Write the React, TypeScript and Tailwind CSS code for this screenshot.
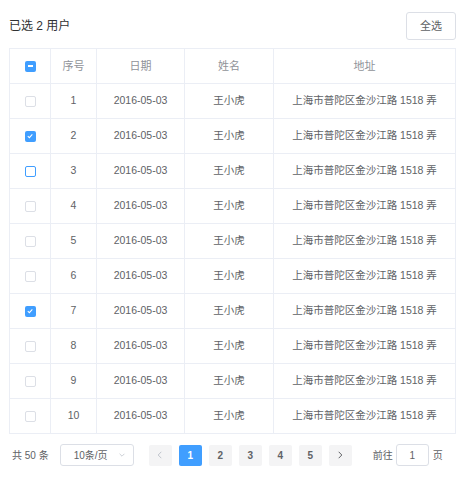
import { useState } from 'react';

const rows = Array.from({ length: 10 }, (_, i) => ({
  id: i + 1,
  date: '2016-05-03',
  name: '王小虎',
  address: '上海市普陀区金沙江路 1518 弄',
}));

function Checkbox({ state, focus }: { state: 'on' | 'off' | 'half'; focus?: boolean }) {
  if (state === 'on') {
    return (
      <span className="inline-flex h-[11px] w-[11px] items-center justify-center rounded-[2px] bg-[#409eff]">
        <svg viewBox="0 0 10 10" className="h-[8px] w-[8px]">
          <path d="M2.2 5.2 L4.2 7.1 L7.9 3" fill="none" stroke="white" strokeWidth="1.3" />
        </svg>
      </span>
    );
  }
  if (state === 'half') {
    return (
      <span className="inline-flex h-[11px] w-[11px] items-center justify-center rounded-[2px] bg-[#409eff]">
        <span className="h-[1.5px] w-[5px] bg-white" />
      </span>
    );
  }
  return (
    <span
      className={`inline-block h-[11px] w-[11px] rounded-[2px] border bg-white ${
        focus ? 'border-[#409eff]' : 'border-[#dcdfe6]'
      }`}
    />
  );
}

export default function App() {
  const [selected] = useState<number[]>([2, 7]);
  const cell = 'border border-[#ebeef5] text-center h-[35px] p-0';

  return (
    <div
      className="w-[474px] h-[485px] bg-white pl-[9px] pr-[18px]"
      style={{ fontFamily: '"Liberation Sans", "Noto Sans CJK SC", sans-serif' }}
    >
      <div className="flex h-[48px] items-center justify-between pt-[4px]">
        <span className="text-[12px] text-[#303133]">已选 {selected.length} 用户</span>
        <button className="h-[28px] w-[50px] rounded-[3px] border border-[#dcdfe6] text-[11px] text-[#606266]">
          全选
        </button>
      </div>

      <table className="w-[447px] table-fixed border-collapse">
        <colgroup>
          <col className="w-[41px]" />
          <col className="w-[46px]" />
          <col className="w-[88px]" />
          <col className="w-[89px]" />
          <col />
        </colgroup>
        <thead>
          <tr className="text-[11px] text-[#909399]">
            <th className={`${cell} font-normal`}>
              <span className="flex items-center justify-center">
                <Checkbox state="half" />
              </span>
            </th>
            <th className={`${cell} font-normal`}>序号</th>
            <th className={`${cell} font-normal`}>日期</th>
            <th className={`${cell} font-normal`}>姓名</th>
            <th className={`${cell} font-normal`}>地址</th>
          </tr>
        </thead>
        <tbody>
          {rows.map((r) => (
            <tr key={r.id} className="text-[10.5px] text-[#606266]">
              <td className={cell}>
                <span className="flex items-center justify-center">
                  <Checkbox state={selected.includes(r.id) ? 'on' : 'off'} focus={r.id === 3} />
                </span>
              </td>
              <td className={cell}>{r.id}</td>
              <td className={cell}>{r.date}</td>
              <td className={cell}>{r.name}</td>
              <td className={cell}>{r.address}</td>
            </tr>
          ))}
        </tbody>
      </table>

      <div className="mt-[10px] flex h-[22px] items-center text-[10px] text-[#606266]">
        <span className="ml-[3px]">共 50 条</span>
        <div className="ml-[11px] flex h-[22px] w-[74px] items-center justify-between rounded-[3px] border border-[#dcdfe6] pl-[13px] pr-[7px]">
          <span>10条/页</span>
          <svg viewBox="0 0 10 10" className="h-[8px] w-[8px]">
            <path d="M2 3.5 L5 6.5 L8 3.5" fill="none" stroke="#c0c4cc" strokeWidth="1" />
          </svg>
        </div>
        <div className="ml-[15px] flex gap-[7px]">
          <span className="flex h-[21px] w-[23px] items-center justify-center rounded-[2px] bg-[#f4f4f5]">
            <svg viewBox="0 0 10 10" className="h-[10px] w-[10px]">
              <path d="M6.3 1.8 L3.2 5 L6.3 8.2" fill="none" stroke="#c0c4cc" strokeWidth="1" />
            </svg>
          </span>
          {[1, 2, 3, 4, 5].map((p) => (
            <span
              key={p}
              className={`flex h-[21px] w-[23px] items-center justify-center rounded-[2px] font-bold ${
                p === 1 ? 'bg-[#409eff] text-white' : 'bg-[#f4f4f5] text-[#606266]'
              }`}
            >
              {p}
            </span>
          ))}
          <span className="flex h-[21px] w-[23px] items-center justify-center rounded-[2px] bg-[#f4f4f5]">
            <svg viewBox="0 0 10 10" className="h-[10px] w-[10px]">
              <path d="M3.7 1.8 L6.8 5 L3.7 8.2" fill="none" stroke="#606266" strokeWidth="1" />
            </svg>
          </span>
        </div>
        <span className="ml-[21px]">前往</span>
        <span className="ml-[3px] flex h-[22px] w-[33px] items-center justify-center rounded-[3px] border border-[#dcdfe6]">
          1
        </span>
        <span className="ml-[4px]">页</span>
      </div>
    </div>
  );
}
